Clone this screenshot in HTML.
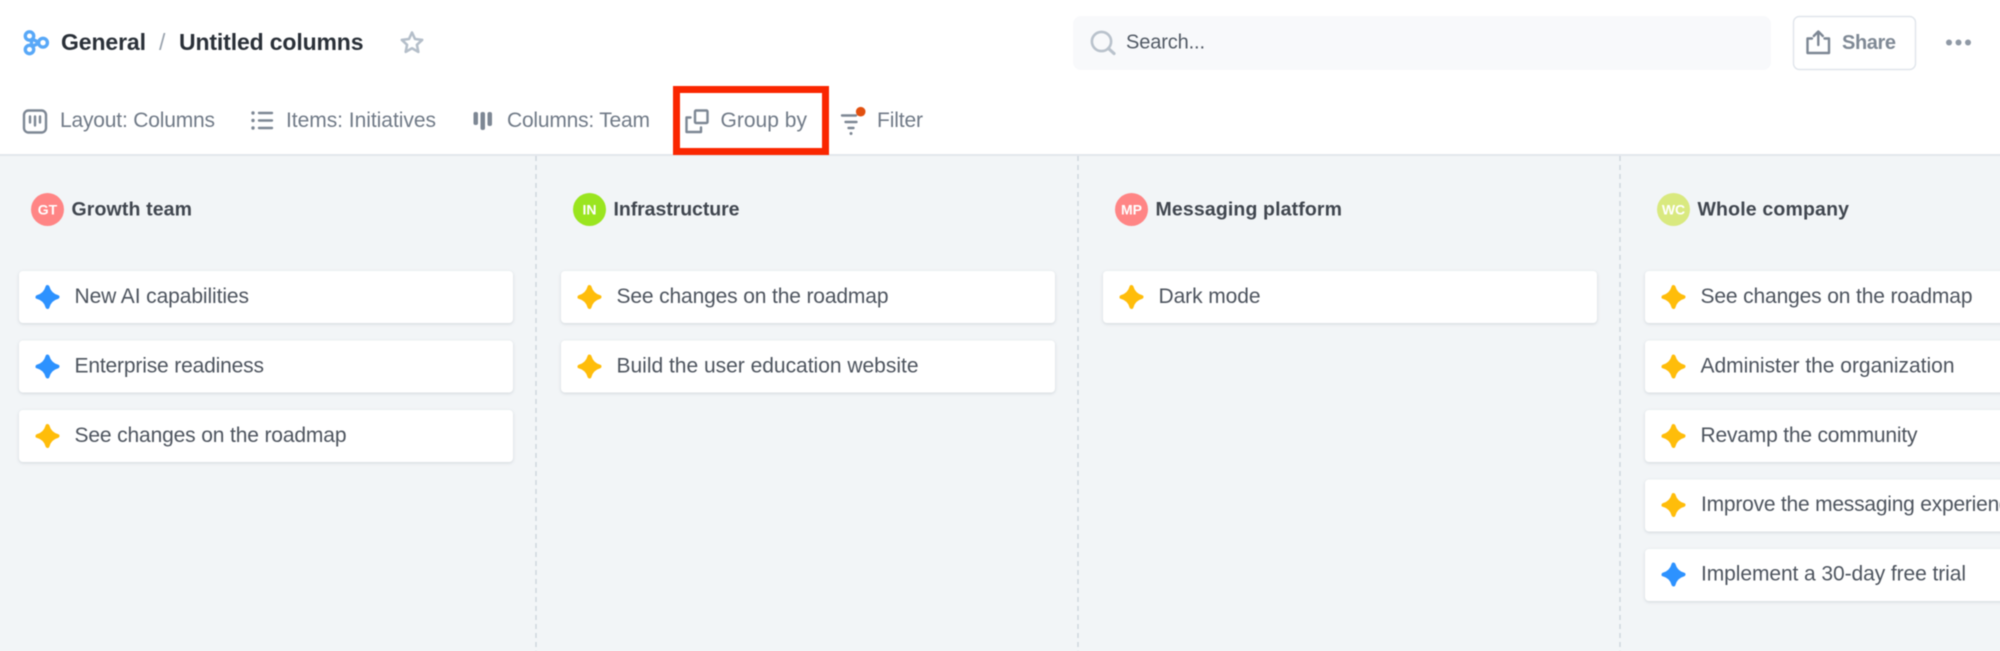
<!DOCTYPE html>
<html lang="en"><head><meta charset="utf-8"><title>Untitled columns</title>
<style>
html,body{margin:0;padding:0;background:#fff;width:2000px;height:651px;overflow:hidden}
body{position:relative}
svg{display:block;position:absolute;left:-10px;top:-10px;filter:blur(.45px)}
text{font-family:"Liberation Sans",sans-serif}
.t{font-size:21px;fill:#4d545e}
.h{font-size:19.5px;font-weight:700;fill:#40464f}
.b{font-size:23px;font-weight:700;fill:#2a3038}
.m{font-size:21px;fill:#707a87;font-weight:400}
.a{font-size:14px;font-weight:700;fill:#fff;text-anchor:middle}
.c{fill:#fff;filter:drop-shadow(0 1px 1.5px rgba(60,75,95,.18))}
.i{fill:none;stroke:#7d8794;stroke-width:2.4;stroke-linecap:round;stroke-linejoin:round}
</style></head><body>
<svg width="2020" height="671" viewBox="-10 -10 2020 671" xmlns="http://www.w3.org/2000/svg" xmlns:xlink="http://www.w3.org/1999/xlink">
<defs>
<path id="s" d="M0-10C1.500-4.500 4.500-1.500 10 0C4.500 1.500 1.500 4.500 0 10C-1.500 4.500-4.500 1.500-10 0C-4.500-1.500-1.500-4.500 0-10Z" stroke-width="4" stroke-linejoin="round"/>
</defs>
<rect x="-10" y="-10" width="2020" height="671" fill="#fff"/>
<rect x="-10" y="155" width="2020" height="506" fill="#f2f5f7"/>
<rect x="-10" y="154" width="2020" height="2" fill="#e3e7ec"/>
<g stroke="#ccd4dc" stroke-width="1.400" stroke-dasharray="5 4">
<path d="M536 156V661M1078 156V661M1620 156V661"/>
</g>

<!-- logo -->
<g fill="none" stroke="#58a8f8" stroke-width="3.400">
<circle cx="29.500" cy="36" r="4.200"/><circle cx="29.500" cy="49.500" r="4.200"/><circle cx="43" cy="42.700" r="4.400"/>
<path d="M32 39L38.500 42.200M32 46.500L38.500 43.300M31.500 40V45.500"/>
</g>
<text class="b" x="61" y="50" textLength="85" lengthAdjust="spacing">General</text>
<text x="159" y="50" font-size="23" fill="#9aa3ae">/</text>
<text class="b" x="179" y="50" textLength="184.500" lengthAdjust="spacing">Untitled columns</text>
<path d="M412 32.500l3 6.500 7.200.9-5.300 4.900 1.400 7.100-6.300-3.600-6.300 3.600 1.400-7.100-5.300-4.900 7.200-.9z" fill="none" stroke="#b5bfca" stroke-width="2.600" stroke-linejoin="round"/>

<!-- search -->
<rect x="1073" y="16" width="698" height="54" rx="8" fill="#f8f9fb"/>
<circle cx="1101.500" cy="41.500" r="9.600" fill="none" stroke="#b9c2cc" stroke-width="2.600"/>
<path d="M1108.500 48.500L1114 53.500" stroke="#b9c2cc" stroke-width="3.200" stroke-linecap="round"/>
<text x="1126" y="48.500" font-size="20" fill="#515964" textLength="79" lengthAdjust="spacing">Search...</text>

<!-- share -->
<rect x="1793.500" y="16.500" width="122" height="53" rx="6" fill="#fff" stroke="#e0e5eb" stroke-width="1.400"/>
<path class="i" d="M1812 38.500h-4.500v14.500h21.500V38.500h-4.500M1818.300 45V32M1813.800 36l4.500-4.500 4.500 4.500"/>
<text x="1842" y="49" font-size="20" font-weight="700" fill="#7f8995" textLength="54" lengthAdjust="spacing">Share</text>
<g fill="#8f99a5"><circle cx="1949" cy="42.500" r="3"/><circle cx="1958.500" cy="42.500" r="3"/><circle cx="1968" cy="42.500" r="3"/></g>

<!-- toolbar -->
<rect class="i" x="24" y="110.500" width="22" height="22" rx="4.500" stroke-width="2.600"/>
<path class="i" d="M30 116.500v6M35 116.500v9M40 116.500v6" stroke-width="2.200"/>
<text class="m" x="60" y="127" textLength="155" lengthAdjust="spacing">Layout: Columns</text>

<path class="i" d="M259 113h13M259 120.500h13M259 128h13"/>
<g fill="#7d8794"><circle cx="253" cy="113" r="1.700"/><circle cx="253" cy="120.500" r="1.700"/><circle cx="253" cy="128" r="1.700"/></g>
<text class="m" x="286" y="127" textLength="150" lengthAdjust="spacing">Items: Initiatives</text>

<g fill="#7d8794"><rect x="473.500" y="112" width="4.500" height="13" rx="2"/><rect x="480.500" y="112" width="4.500" height="18" rx="2"/><rect x="487.500" y="112" width="4.500" height="14" rx="2"/></g>
<text class="m" x="507" y="127" textLength="143" lengthAdjust="spacing">Columns: Team</text>

<rect class="i" x="695" y="110.500" width="12.500" height="12.500" rx="1"/>
<path class="i" d="M690.500 117.500H686.500V132H701V127.500M686.500 124"/>
<text class="m" x="720.500" y="127" textLength="86.500" lengthAdjust="spacing">Group by</text>

<path class="i" d="M842 115.500h14M845.500 122h11M848.500 128h5" stroke-width="2.200"/>
<circle cx="851" cy="133.500" r="1.500" fill="#7d8794"/>
<circle cx="860.700" cy="111.700" r="4.800" fill="#e2500f"/>
<text class="m" x="877" y="127" textLength="46" lengthAdjust="spacing">Filter</text>

<!-- red highlight -->
<rect x="676.500" y="89.500" width="149" height="62" fill="none" stroke="#fa2600" stroke-width="7"/>

<!-- column headers -->
<circle cx="47.500" cy="209.500" r="16.500" fill="#ff8585"/><text class="a" x="47.500" y="214.500">GT</text>
<text class="h" x="71.500" y="215.500" textLength="120.500" lengthAdjust="spacing">Growth team</text>
<circle cx="589.500" cy="209.500" r="16.500" fill="#9ae51f"/><text class="a" x="589.500" y="214.500">IN</text>
<text class="h" x="613.500" y="215.500" textLength="126" lengthAdjust="spacing">Infrastructure</text>
<circle cx="1131.500" cy="209.500" r="16.500" fill="#ff8585"/><text class="a" x="1131.500" y="214.500">MP</text>
<text class="h" x="1155.500" y="215.500" textLength="186.500" lengthAdjust="spacing">Messaging platform</text>
<circle cx="1673.500" cy="209.500" r="16.500" fill="#d9e97f"/><text class="a" x="1673.500" y="214.500">WC</text>
<text class="h" x="1697.500" y="215.500" textLength="151.500" lengthAdjust="spacing">Whole company</text>

<!-- col 1 -->
<rect class="c" x="19" y="271" width="494" height="52" rx="4"/>
<use xlink:href="#s" href="#s" transform="translate(47.500 297)" fill="#2d92ff" stroke="#2d92ff"/>
<text class="t" x="74.500" y="303" textLength="174.500" lengthAdjust="spacing">New AI capabilities</text>
<rect class="c" x="19" y="340.500" width="494" height="52" rx="4"/>
<use xlink:href="#s" href="#s" transform="translate(47.500 366.500)" fill="#2d92ff" stroke="#2d92ff"/>
<text class="t" x="74.500" y="372.500" textLength="189.500" lengthAdjust="spacing">Enterprise readiness</text>
<rect class="c" x="19" y="410" width="494" height="52" rx="4"/>
<use xlink:href="#s" href="#s" transform="translate(47.500 436)" fill="#ffbd0a" stroke="#ffbd0a"/>
<text class="t" x="74.500" y="442" textLength="272" lengthAdjust="spacing">See changes on the roadmap</text>

<!-- col 2 -->
<rect class="c" x="561" y="271" width="494" height="52" rx="4"/>
<use xlink:href="#s" href="#s" transform="translate(589.500 297)" fill="#ffbd0a" stroke="#ffbd0a"/>
<text class="t" x="616.500" y="303" textLength="272" lengthAdjust="spacing">See changes on the roadmap</text>
<rect class="c" x="561" y="340.500" width="494" height="52" rx="4"/>
<use xlink:href="#s" href="#s" transform="translate(589.500 366.500)" fill="#ffbd0a" stroke="#ffbd0a"/>
<text class="t" x="616.500" y="372.500" textLength="302" lengthAdjust="spacing">Build the user education website</text>

<!-- col 3 -->
<rect class="c" x="1103" y="271" width="494" height="52" rx="4"/>
<use xlink:href="#s" href="#s" transform="translate(1131.500 297)" fill="#ffbd0a" stroke="#ffbd0a"/>
<text class="t" x="1158.500" y="303" textLength="102" lengthAdjust="spacing">Dark mode</text>

<!-- col 4 -->
<rect class="c" x="1645" y="271" width="494" height="52" rx="4"/>
<use xlink:href="#s" href="#s" transform="translate(1673.500 297)" fill="#ffbd0a" stroke="#ffbd0a"/>
<text class="t" x="1700.500" y="303" textLength="272" lengthAdjust="spacing">See changes on the roadmap</text>
<rect class="c" x="1645" y="340.500" width="494" height="52" rx="4"/>
<use xlink:href="#s" href="#s" transform="translate(1673.500 366.500)" fill="#ffbd0a" stroke="#ffbd0a"/>
<text class="t" x="1700.500" y="372.500" textLength="254" lengthAdjust="spacing">Administer the organization</text>
<rect class="c" x="1645" y="410" width="494" height="52" rx="4"/>
<use xlink:href="#s" href="#s" transform="translate(1673.500 436)" fill="#ffbd0a" stroke="#ffbd0a"/>
<text class="t" x="1700.500" y="442" textLength="217" lengthAdjust="spacing">Revamp the community</text>
<rect class="c" x="1645" y="479.500" width="494" height="52" rx="4"/>
<use xlink:href="#s" href="#s" transform="translate(1673.500 505)" fill="#ffbd0a" stroke="#ffbd0a"/>
<text class="t" x="1701" y="511" textLength="320" lengthAdjust="spacing">Improve the messaging experience</text>
<rect class="c" x="1645" y="549" width="494" height="52" rx="4"/>
<use xlink:href="#s" href="#s" transform="translate(1673.500 574.500)" fill="#2d92ff" stroke="#2d92ff"/>
<text class="t" x="1701" y="580.500" textLength="265" lengthAdjust="spacing">Implement a 30-day free trial</text>
</svg>
</body></html>
